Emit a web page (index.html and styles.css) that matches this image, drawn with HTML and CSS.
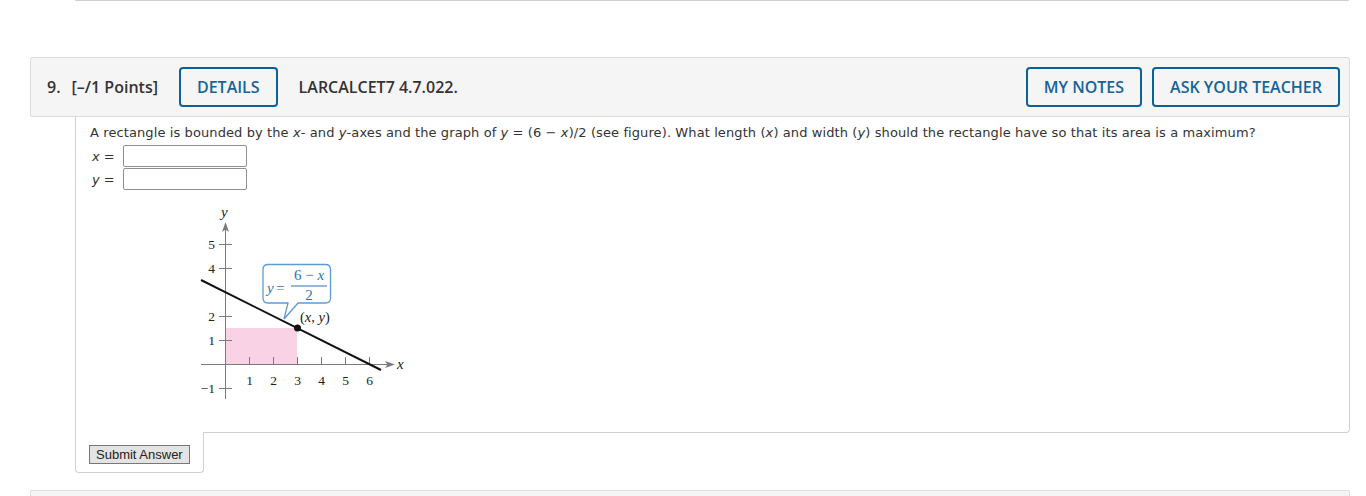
FILE: index.html
```
<!DOCTYPE html>
<html>
<head>
<meta charset="utf-8">
<link rel="stylesheet" href="styles.css">
</head>
<body>
<div class="prev"></div>
<div class="question">
  <div class="qhead">
    <span class="qnum">9.</span>
    <span class="pts">[–/1 Points]</span>
    <button class="btn btn-details">DETAILS</button>
    <span class="qcode">LARCALCET7 4.7.022.</span>
    <span class="spacer"></span>
    <button class="btn">MY NOTES</button>
    <button class="btn">ASK YOUR TEACHER</button>
  </div>
  <div class="qbody">
    <p class="prompt">A rectangle is bounded by the <i>x</i>- and <i>y</i>-axes and the graph of <i>y</i> = (6 − <i>x</i>)/2 (see figure). What length (<i>x</i>) and width (<i>y</i>) should the rectangle have so that its area is a maximum?</p>
    <div class="ansrow"><span class="lbl"><i>x</i> =</span><input class="ans" type="text"></div>
    <div class="ansrow"><span class="lbl"><i>y</i> =</span><input class="ans" type="text"></div>
    <svg class="figure" width="220" height="202" viewBox="0 0 220 202">
      <rect x="35" y="126" width="72" height="36" fill="#f9d2e5"/>
      <g stroke="#7a7a7a" stroke-width="1" fill="none">
        <line x1="35.5" y1="197" x2="35.5" y2="25"/>
        <line x1="11" y1="162.5" x2="198" y2="162.5"/>
        <line x1="29" y1="42.5" x2="42" y2="42.5"/>
        <line x1="29" y1="66.5" x2="42" y2="66.5"/>
        <line x1="29" y1="114.5" x2="42" y2="114.5"/>
        <line x1="29" y1="138.5" x2="42" y2="138.5"/>
        <line x1="29" y1="186.5" x2="42" y2="186.5"/>
        <line x1="59.5" y1="155" x2="59.5" y2="162"/>
        <line x1="83.5" y1="155" x2="83.5" y2="162"/>
        <line x1="107.5" y1="155" x2="107.5" y2="162"/>
        <line x1="131.5" y1="155" x2="131.5" y2="162"/>
        <line x1="155.5" y1="155" x2="155.5" y2="162"/>
        <line x1="179.5" y1="155" x2="179.5" y2="162"/>
      </g>
      <polygon points="35.5,20 32,30 35.5,27.5 39,30" fill="#7a7a7a"/>
      <polygon points="205,162.5 195,159 197.5,162.5 195,166" fill="#7a7a7a"/>
      <g class="fig-num" text-anchor="end">
        <text x="25" y="47">5</text>
        <text x="25" y="71">4</text>
        <text x="25" y="119">2</text>
        <text x="25" y="143">1</text>
        <text x="25" y="191">−1</text>
      </g>
      <g class="fig-num" text-anchor="middle">
        <text x="59.5" y="183">1</text>
        <text x="83.5" y="183">2</text>
        <text x="107.5" y="183">3</text>
        <text x="131.5" y="183">4</text>
        <text x="155.5" y="183">5</text>
        <text x="179.5" y="183">6</text>
      </g>
      <text class="fig-var" x="31" y="15">y</text>
      <text class="fig-var" x="207" y="167">x</text>
      <line x1="11" y1="78" x2="191" y2="168" stroke="#111" stroke-width="2"/>
      <circle cx="107.5" cy="126" r="3.5" fill="#111"/>
      <text class="fig-lbl" x="110" y="120">(<tspan font-style="italic">x</tspan>, <tspan font-style="italic">y</tspan>)</text>
      <path d="M78 62.5 H135.5 Q140.5 62.5 140.5 67.5 V96 Q140.5 101 135.5 101 H108 L94 117 L98 101 H78 Q73 101 73 96 V67.5 Q73 62.5 78 62.5 Z" fill="#fff" stroke="#5c9bd6" stroke-width="1.3"/>
      <g class="fig-blue">
        <text x="77" y="91" font-style="italic">y</text>
        <text x="86" y="91">=</text>
        <text x="119" y="78" text-anchor="middle">6 − <tspan font-style="italic">x</tspan></text>
        <line x1="101" y1="84" x2="137" y2="84" stroke="#2f72b8" stroke-width="1"/>
        <text x="119" y="98" text-anchor="middle">2</text>
      </g>
    </svg>
  </div>
  <div class="qfoot"><button class="submit">Submit Answer</button></div>
</div>
<div class="question next">
  <div class="qhead"></div>
</div>
</body>
</html>
```
FILE: styles.css
```
html, body {
  margin: 0;
  padding: 0;
  background: #fff;
}
body {
  font-family: "DejaVu Sans", Verdana, sans-serif;
  color: #333;
}
.prev {
  margin-left: 75px;
  width: 1274px;
  height: 0;
  border-bottom: 1px solid #cfcfcf;
  border-radius: 0 0 4px 4px;
  margin-bottom: 56px;
}
.question {
  margin-left: 30px;
  width: 1320px;
}
.qhead {
  box-sizing: border-box;
  height: 60px;
  display: flex;
  align-items: center;
  padding: 0 9px 0 16px;
  background: #f5f5f5;
  border: 1px solid #dcdcdc;
  border-radius: 2px;
  font-family: "Open Sans", sans-serif;
  font-weight: 600;
  font-size: 16px;
  color: #333;
}
.pts {
  margin-left: 11px;
}
.btn {
  box-sizing: border-box;
  height: 40px;
  padding: 0 16px;
  border: 2px solid #0b6298;
  border-radius: 4px;
  background: transparent;
  font-family: "Open Sans", sans-serif;
  font-weight: 600;
  font-size: 16px;
  color: #17639a;
  margin-left: 10px;
}
.btn-details {
  margin-left: 21px;
}
.qcode {
  margin-left: 21px;
}
.spacer {
  flex: 1;
}
.qbody {
  margin-left: 45px;
  border: 1px solid #d0d0d0;
  border-top: none;
  border-radius: 0 0 4px 0;
  padding: 7px 14px 28px 14px;
  font-size: 13px;
}
.prompt {
  margin: 0 0 3px 0;
  line-height: 18px;
  letter-spacing: 0.1px;
}
.ansrow {
  display: flex;
  align-items: center;
  height: 22px;
  margin-bottom: 1px;
}
.lbl {
  width: 31px;
  padding-left: 2px;
}
.ans {
  box-sizing: border-box;
  width: 124px;
  height: 22px;
  margin: 0;
  border: 1px solid #8f8f8f;
  border-radius: 2px;
  background: #fff;
}
.figure {
  display: block;
  margin: 12px 0 0 100px;
}
.fig-num {
  font-family: "Liberation Serif", serif;
  font-size: 13.5px;
  fill: #222;
}
.fig-lbl {
  font-family: "Liberation Serif", serif;
  font-size: 14.5px;
  fill: #222;
}
.fig-var {
  font-family: "Liberation Serif", serif;
  font-style: italic;
  font-size: 15px;
  fill: #222;
}
.fig-blue {
  font-family: "Liberation Serif", serif;
  font-size: 15px;
  fill: #2f72b8;
}
.qfoot {
  box-sizing: border-box;
  margin-left: 45px;
  margin-top: -1px;
  width: 129px;
  background: #fff;
  border: 1px solid #d0d0d0;
  border-top: none;
  border-radius: 0 0 4px 4px;
  padding: 12px 0 8px 13px;
}
.submit {
  box-sizing: border-box;
  height: 19px;
  padding: 0 6px;
  margin: 0;
  font-family: "Liberation Sans", Arial, sans-serif;
  font-size: 13px;
  color: #222;
  background: #e3e3e3;
  border: 1px solid #777;
  border-radius: 0;
}
.next {
  margin-top: 17px;
}
```
